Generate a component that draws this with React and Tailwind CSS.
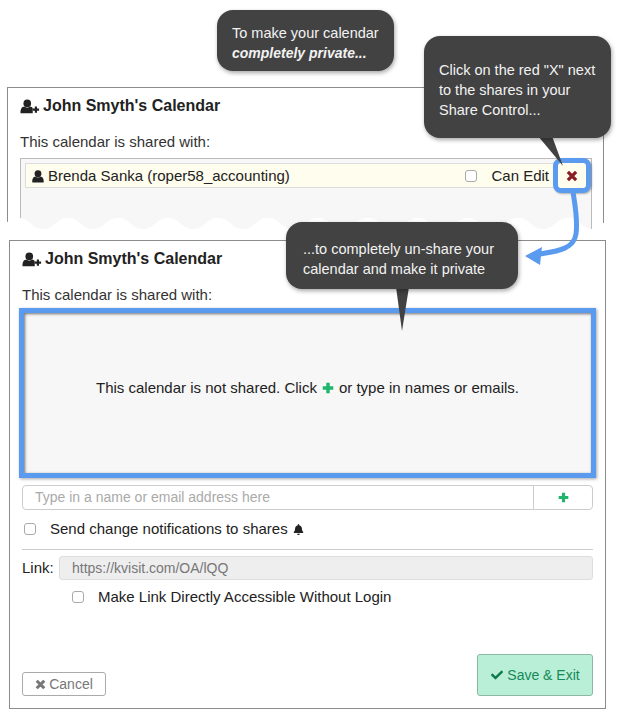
import { FaBell, FaCheck } from "react-icons/fa";

function UserIcon({ className = "" }) {
	return (
		<svg className={className} viewBox="0 0 16 16" fill="currentColor">
			<circle cx="8" cy="4.6" r="4.2" />
			<path d="M1 15.5 C0.6 10.5 2.4 8.4 4.8 8 C6.6 9.7 9.4 9.7 11.2 8 C13.6 8.4 15.4 10.5 15 15.5 Z" />
		</svg>
	);
}

function UserPlusIcon({ className = "" }) {
	return (
		<svg className={className} viewBox="0 0 22 16" fill="currentColor">
			<circle cx="8" cy="4.6" r="4.2" />
			<path d="M0.6 15.5 C0.2 10.5 2.2 8.4 4.8 8 C6.6 9.7 9.4 9.7 11.2 8 C12.4 8.2 13.4 8.8 14 9.6 L14 15.5 Z" />
			<path d="M17.5 8 V15 M14 11.5 H21" fill="none" stroke="currentColor" strokeWidth="2.4" />
		</svg>
	);
}

function CrossIcon({ className = "" }) {
	return (
		<svg className={className} viewBox="0 0 16 16" fill="none" stroke="currentColor" strokeWidth="4.4">
			<path d="M2.5 2.5 L13.5 13.5 M13.5 2.5 L2.5 13.5" />
		</svg>
	);
}

function PlusIcon({ className = "" }) {
	return (
		<svg className={className} viewBox="0 0 16 16" fill="none" stroke="currentColor" strokeWidth="4.6">
			<path d="M8 1 V15 M1 8 H15" />
		</svg>
	);
}

function Checkbox({ className = "" }) {
	return (
		<span
			className={`block w-[12px] h-[12px] shrink-0 bg-white border border-[#aaa] rounded-[3px] ${className}`}
		></span>
	);
}

function Callout({ className = "", children }) {
	return (
		<div
			className={`absolute z-20 bg-[#424242] text-[#f2f2f2] text-[14.5px] leading-[20px] shadow-[1px_2px_4px_rgba(0,0,0,0.35)] ${className}`}
		>
			{children}
		</div>
	);
}

function PanelTitle() {
	return (
		<div className="flex items-center text-[16px] font-bold text-[#222] leading-[20px]">
			<UserPlusIcon className="w-[20px] h-[15px] mr-[3px] text-[#222]" />
			John Smyth's Calendar
		</div>
	);
}

// white edge that cuts the top panel off, one bump every 50px
function wavePath() {
	let d = "M0 222 L7 222 L18 218";
	for (let x = 18; x < 618; x += 50) {
		d += ` C${x + 12} 218 ${x + 13} 229 ${x + 25} 229 C${x + 37} 229 ${x + 38} 218 ${x + 50} 218`;
	}
	return d + " L620 240 L0 240 Z";
}

export default function App() {
	return (
		<div className="relative w-[620px] h-[716px] overflow-hidden bg-white font-['Liberation_Sans',Arial,sans-serif] text-[15px] text-[#333]">
			{/* Top panel, cut off by a wave */}
			<div className="ml-[7px] mt-[87px] w-[597px] h-[136px] absolute border border-b-0 border-[#8c8c8c] pl-[12px] pt-[8px] pr-[12px]">
				<PanelTitle />
				<div className="mt-[16px] leading-[20px]">This calendar is shared with:</div>
				<div className="mt-[6px] h-[76px] w-[572px] border border-b-0 border-[#bbb] bg-[#f7f7f7] pt-[4px] pl-[4px] pr-[4px]">
					<div className="flex items-center h-[25px] pt-px border border-[#ddd] bg-[#fffdee] pl-[5px] text-[#222]">
						<UserIcon className="w-[14px] h-[13px] mr-[3px]" />
						<span>Brenda Sanka (roper58_accounting)</span>
						<Checkbox className="ml-auto mr-[14px]" />
						<span className="mr-[37px]">Can Edit</span>
					</div>
				</div>
			</div>

			{/* Wave cut */}
			<svg className="absolute left-0 top-0 z-10" width="620" height="240" viewBox="0 0 620 240">
				<path d={wavePath()} fill="#fff" />
			</svg>

			{/* Main panel */}
			<div className="absolute z-10 left-[9px] top-[240px] w-[597px] h-[469px] bg-white border border-[#8c8c8c] pl-[12px] pr-[12px] pt-[8px] flex flex-col">
				<PanelTitle />
				<div className="mt-[16px] leading-[20px]">This calendar is shared with:</div>
				<div className="mt-[3px] -ml-[3px] w-[577px] h-[170px] shrink-0 border-[5px] border-[#5b9bef] bg-[#f7f7f7] shadow-[inset_1px_1px_3px_rgba(0,0,0,0.55),1px_1px_3px_rgba(0,0,0,0.35)] flex items-center justify-center pb-[10px] text-[#222]">
					This calendar is not shared. Click
					<PlusIcon className="w-[12px] h-[12px] mx-[5px] text-[#1fb56c]" />
					or type in names or emails.
				</div>
				<div className="mt-[7px] flex h-[25px] w-[571px]">
					<div className="flex-1 border border-[#ccc] rounded-l-[4px] pl-[12px] leading-[23px] text-[14px] text-[#aaa]">
						Type in a name or email address here
					</div>
					<div className="w-[60px] -ml-px border border-[#ccc] rounded-r-[4px] flex items-center justify-center">
						<PlusIcon className="w-[11px] h-[11px] text-[#1fb56c]" />
					</div>
				</div>
				<div className="mt-[9px] ml-[2px] flex items-center h-[20px] text-[#222]">
					<Checkbox />
					<span className="ml-[14px]">Send change notifications to shares</span>
					<FaBell className="w-[11px] h-[11px] ml-[5px]" />
				</div>
				<div className="mt-[10px] h-px w-[571px] bg-[#ccc]"></div>
				<div className="mt-[6px] flex items-center text-[#222]">
					<span className="w-[37px]">Link:</span>
					<div className="w-[534px] h-[24px] bg-[#eee] border border-[#ddd] rounded-[3px] pl-[12px] leading-[22px] text-[14px] text-[#777]">
						https://kvisit.com/OA/lQQ
					</div>
				</div>
				<div className="mt-[7px] ml-[50px] flex items-center h-[20px] text-[#222]">
					<Checkbox />
					<span className="ml-[14px]">Make Link Directly Accessible Without Login</span>
				</div>
				<div className="mt-auto mb-[12px] w-[571px] flex items-end justify-between">
					<div className="flex items-center justify-center w-[84px] h-[24px] border border-[#aaa] rounded-[3px] text-[14px] text-[#777]">
						<CrossIcon className="w-[11px] h-[11px] mr-[3px]" />
						Cancel
					</div>
					<div className="flex items-center justify-center w-[116px] h-[42px] pl-[1px] bg-[#b9efd6] border border-[#8cb8a4] rounded-[3px] text-[14px] text-[#16895a]">
						<FaCheck className="w-[12px] h-[12px] mr-[4px] text-[#0f7a4c]" />
						Save &amp; Exit
					</div>
				</div>
			</div>

			{/* Red X highlight */}
			<div className="absolute z-10 left-[553px] top-[158px] w-[38px] h-[35px] border-[5px] border-[#5b9bef] rounded-[8px] bg-[#fffdee] flex items-center justify-center shadow-[1px_1px_2px_rgba(0,0,0,0.3)]">
				<CrossIcon className="w-[12px] h-[12px] text-[#8a1c24]" />
			</div>

			{/* Arrow and tails */}
			<svg className="absolute left-0 top-0 z-20 pointer-events-none" width="620" height="716" viewBox="0 0 620 716">
				<path d="M573 192 C575 205 578 220 576 234 C574 248 560 251 540 254" fill="none" stroke="#5b9bef" strokeWidth="5" />
				<path d="M525 256 L542 247 L540 265 Z" fill="#5b9bef" />
				<path d="M538 136 L552 136 L563 166 Z" fill="#424242" />
				<path d="M396 287 L409 287 L402 331 Z" fill="#424242" />
			</svg>

			<Callout className="left-[217px] top-[10px] w-[177px] h-[61px] rounded-[16px] pl-[15px] pt-[13px]">
				To make your calendar
				<br />
				<b className="text-[14px]">
					<i>completely private...</i>
				</b>
			</Callout>
			<Callout className="left-[424px] top-[36px] w-[187px] h-[102px] rounded-[16px] pl-[15px] pt-[24px]">
				Click on the red "X" next
				<br />
				to the shares in your
				<br />
				Share Control...
			</Callout>
			<Callout className="left-[286px] top-[222px] w-[232px] h-[67px] rounded-[16px] pl-[17px] pt-[17px]">
				...to completely un-share your
				<br />
				calendar and make it private
			</Callout>
		</div>
	);
}
